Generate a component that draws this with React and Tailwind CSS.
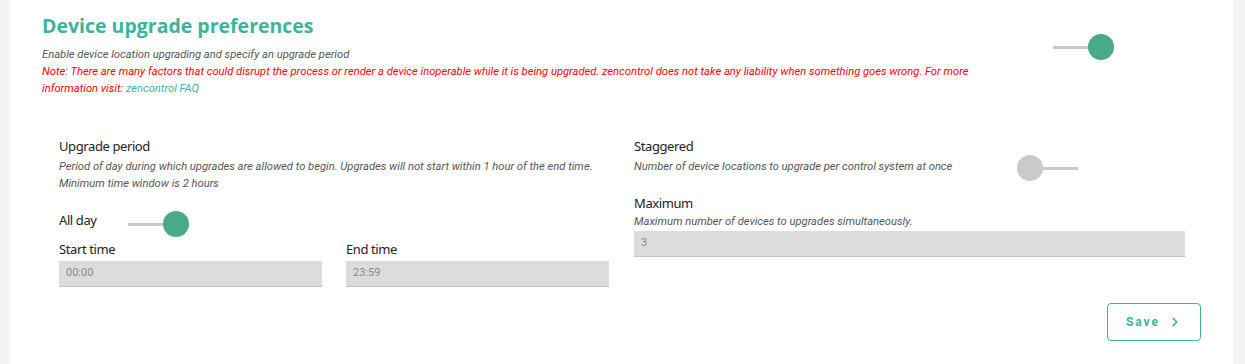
import { ChevronRight } from "lucide-react";

const label = "font-['Noto_Sans',sans-serif] text-[13px] tracking-[-0.4px] leading-[18px] text-[#222]";
const hint = "font-['Roboto',sans-serif] italic text-[11.2px] leading-[17px] text-[#555]";

function Toggle({ on }) {
  return (
    <div className="relative h-[26px] w-[48px]">
      <div className="absolute left-0 right-0 top-[12px] h-[3px] bg-[#c9c9c9]" />
      <div
        className={`absolute top-0 h-[26px] w-[26px] rounded-full ${
          on ? "right-[-13px] bg-[#49a98b]" : "left-[-13px] bg-[#cacaca]"
        }`}
      />
    </div>
  );
}

function Field({ value }) {
  return (
    <div className="flex h-[26px] items-center border-b border-[#c4c4c4] bg-[#dcdcdc] px-[7px] font-['Roboto',sans-serif] text-[11px] text-[#8a8a8a]">
      {value}
    </div>
  );
}

export default function App() {
  return (
    <div className="h-[364px] bg-[#f3f3f3] px-[10px] pr-[12px]">
      <div className="h-full bg-white pl-[32px] pr-[32px] pt-[12px]">
        <div className="flex items-start justify-between">
          <div className="w-[960px]">
            <h1 className="font-['Open_Sans',sans-serif] text-[19.5px] font-bold leading-[28px] text-[#3db39c]">
              Device upgrade preferences
            </h1>
            <p className={`${hint} mt-[6px]`}>Enable device location upgrading and specify an upgrade period</p>
            <p className="font-['Roboto',sans-serif] italic text-[11.2px] leading-[17px] text-[#ff0000]">
              Note: There are many factors that could disrupt the process or render a device inoperable while it is being
              upgraded. zencontrol does not take any liability when something goes wrong. For more information visit:{" "}
              <a className="text-[#3db39c]">zencontrol FAQ</a>
            </p>
          </div>
          <div className="mr-[100px] mt-[22px]">
            <Toggle on />
          </div>
        </div>

        <div className="mt-[40px] grid grid-cols-[550px_551px] gap-[25px] pl-[17px]">
          <div>
            <div className={label}>Upgrade period</div>
            <p className={`${hint} mt-[3px] w-[550px]`}>
              Period of day during which upgrades are allowed to begin. Upgrades will not start within 1 hour of the end
              time. Minimum time window is 2 hours
            </p>
            <div className="mt-[11px] flex items-center">
              <span className={`${label} w-[69px]`}>All day</span>
              <div className="mt-[8px]">
                <Toggle on />
              </div>
            </div>
            <div className="mt-[3px] grid grid-cols-2 gap-[24px]">
              <div>
                <div className={`${label} mb-[3px]`}>Start time</div>
                <Field value="00:00" />
              </div>
              <div>
                <div className={`${label} mb-[3px]`}>End time</div>
                <Field value="23:59" />
              </div>
            </div>
          </div>

          <div>
            <div className={label}>Staggered</div>
            <div className="mt-[3px] flex items-start">
              <p className={`${hint} w-[396px]`}>Number of device locations to upgrade per control system at once</p>
              <div className="-mt-[3px]">
                <Toggle />
              </div>
            </div>
            <div className={`${label} mt-[13px]`}>Maximum</div>
            <p className={`${hint} mt-[1px]`}>Maximum number of devices to upgrades simultaneously.</p>
            <div className="mt-[1px]">
              <Field value="3" />
            </div>
          </div>
        </div>

        <div className="mt-[16px] flex justify-end">
          <button className="flex h-[38px] w-[94px] items-center justify-center gap-[8px] rounded-[4px] border border-[#3db39c] font-['Roboto',sans-serif] text-[12px] font-bold tracking-[2px] text-[#3db39c]">
            Save
            <ChevronRight size={14} strokeWidth={3} />
          </button>
        </div>
      </div>
    </div>
  );
}
